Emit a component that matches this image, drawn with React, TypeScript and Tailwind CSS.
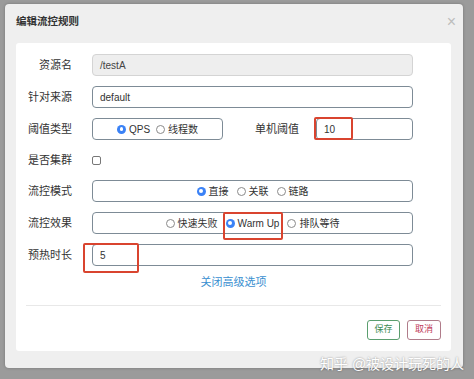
import React from "react";

const font = { fontFamily: '"Liberation Sans", "Noto Sans CJK SC", sans-serif' };

function Radio({ checked, label }: { checked?: boolean; label: string }) {
  return (
    <span className="flex items-center gap-[3px]">
      {checked ? (
        <span className="flex h-[9px] w-[9px] items-center justify-center rounded-full bg-[#3b82f6]">
          <span className="h-[3.5px] w-[3.5px] rounded-full bg-white" />
        </span>
      ) : (
        <span className="h-[9px] w-[9px] rounded-full border border-[#8a8a8a] bg-white" />
      )}
      <span className="text-[10px] text-[#333]">{label}</span>
    </span>
  );
}

function Label({ children }: { children: React.ReactNode }) {
  return <div className="w-[56px] shrink-0 text-right text-[11px] text-[#333]">{children}</div>;
}

export default function App() {
  return (
    <div className="relative h-[379px] w-[474px] overflow-hidden bg-[#9b9b9b] pl-[5px] pt-[4px]" style={font}>
      <div className="flex h-[364px] w-[458px] flex-col rounded-[4px] bg-[#efefef] shadow-[0_0_3px_rgba(0,0,0,0.25)]">
        {/* header */}
        <div className="flex h-[39px] items-start justify-between pl-[11px] pr-[7px] pt-[10px]">
          <span className="text-[10.5px] font-bold text-[#333]">编辑流控规则</span>
          <span className="text-[16px] leading-none text-[#bdbdbd]">×</span>
        </div>

        {/* body */}
        <div className="ml-[11px] mr-[12px] flex h-[308px] flex-col rounded-[3px] bg-white pt-[11px]">
          <div className="flex flex-col gap-[10px]">
            <div className="flex h-[22px] items-center gap-[20px]">
              <Label>资源名</Label>
              <div className="flex h-[22px] w-[321px] items-center rounded-[4px] border border-[#d4d4d4] bg-[#eeeeee] px-[7px] text-[10px] text-[#444]">
                /testA
              </div>
            </div>
            <div className="flex h-[22px] items-center gap-[20px]">
              <Label>针对来源</Label>
              <div className="flex h-[22px] w-[321px] items-center rounded-[4px] border border-[#7d8b96] bg-white px-[7px] text-[10px] text-[#333]">
                default
              </div>
            </div>
            <div className="flex h-[22px] items-center gap-[20px]">
              <Label>阈值类型</Label>
              <div className="flex h-[22px] w-[131px] items-center justify-center gap-[6px] rounded-[4px] border border-[#7d8b96] bg-white">
                <Radio checked label="QPS" />
                <Radio label="线程数" />
              </div>
              <div className="ml-[12px] w-[44px] text-[11px] text-[#333]">单机阈值</div>
              <div className="relative ml-[-3px] flex h-[22px] w-[97px] items-center rounded-[4px] border border-[#7d8b96] bg-white px-[7px] text-[10px] text-[#333]">
                10
                <span className="absolute left-[-3px] top-[-2px] h-[23px] w-[39px] rounded-[2px] border-2 border-[#d9442f]" />
              </div>
            </div>
            <div className="flex h-[20px] items-center gap-[20px]">
              <Label>是否集群</Label>
              <span className="h-[9px] w-[9px] rounded-[2px] border border-[#777] bg-white" />
            </div>
            <div className="flex h-[22px] items-center gap-[20px]">
              <Label>流控模式</Label>
              <div className="flex h-[22px] w-[321px] items-center justify-center gap-[8px] rounded-[4px] border border-[#7d8b96] bg-white">
                <Radio checked label="直接" />
                <Radio label="关联" />
                <Radio label="链路" />
              </div>
            </div>
            <div className="flex h-[22px] items-center gap-[20px]">
              <Label>流控效果</Label>
              <div className="flex h-[22px] w-[321px] items-center justify-center gap-[8px] rounded-[4px] border border-[#7d8b96] bg-white">
                <Radio label="快速失败" />
                <span className="relative">
                  <Radio checked label="Warm Up" />
                  <span className="absolute left-[-3px] top-[-4px] h-[28px] w-[60px] rounded-[2px] border-2 border-[#d9442f]" />
                </span>
                <Radio label="排队等待" />
              </div>
            </div>
            <div className="flex h-[22px] items-center gap-[20px]">
              <Label>预热时长</Label>
              <div className="relative flex h-[22px] w-[321px] items-center rounded-[4px] border border-[#7d8b96] bg-white px-[7px] text-[10px] text-[#333]">
                5
                <span className="absolute left-[-10px] top-[-2px] h-[30px] w-[56px] rounded-[2px] border-2 border-[#d9442f]" />
              </div>
            </div>
          </div>

          <div className="mt-[8px] text-center text-[11px] text-[#3a8fd0]">关闭高级选项</div>

          <div className="mx-[10px] mt-[14px] border-t border-[#e8e8e8]" />

          <div className="mr-[10px] mt-[14px] flex justify-end gap-[7px]">
            <div className="flex h-[20px] w-[33px] items-center justify-center rounded-[3px] border border-[#5a9e6e] text-[9px] text-[#3d8b53]">
              保存
            </div>
            <div className="flex h-[20px] w-[34px] items-center justify-center rounded-[3px] border border-[#b07c8a] text-[9px] text-[#c0395a]">
              取消
            </div>
          </div>
        </div>
      </div>

      <div className="absolute left-[320px] top-[357px] text-[14px] leading-none text-white [text-shadow:0_0_2px_rgba(0,0,0,0.45)]">
        知乎 @被设计玩死的人
      </div>
    </div>
  );
}
